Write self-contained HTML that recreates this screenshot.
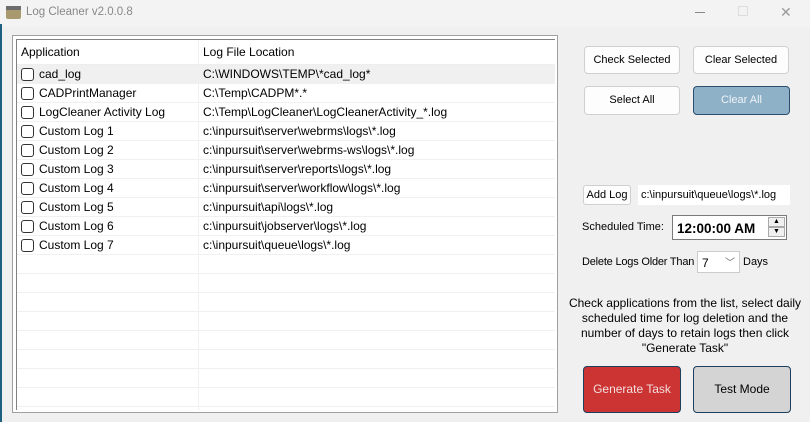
<!DOCTYPE html>
<html><head><meta charset="utf-8"><style>
*{box-sizing:border-box;margin:0;padding:0}
body{width:810px;height:422px;overflow:hidden;background:#f0f0f0;font-family:"Liberation Sans",sans-serif;font-size:11px;color:#000;position:relative}
.abs{position:absolute}
.title{left:0;top:0;width:810px;height:27px;background:#f3f3f3}
.lb{left:0;top:24px;width:2px;height:398px;background:#1f5f80}
.list{left:12px;top:35px;width:546px;height:378px;border:1px solid #a0a0a0;background:#fff}
.list .in{position:absolute;left:3px;top:3px;right:2px;bottom:2px;border:1px solid #828282;border-right:none;border-bottom:none;background:#fff;overflow:hidden}
.row{position:absolute;left:0;width:540px;height:19px;border-bottom:1px solid #f0f0f0}
.row span{position:absolute;top:2px;font-size:12px}
.cb{position:absolute;left:4px;top:3px;width:13px;height:13px;border:1px solid #333;border-radius:3px;background:#fff}
.div{position:absolute;left:181px;top:0;width:1px;height:400px;background:#f0f0f0}
.btn{position:absolute;background:#fdfdfd;border:1px solid #d0d0d0;border-radius:4px;text-align:center;font-size:11px}
</style></head><body>
<div class="abs title"></div>
<div class="abs" style="left:6px;top:6px;width:15px;height:13px;background:#a89a6e;border-radius:2px"></div>
<div class="abs" style="left:6px;top:6px;width:15px;height:4px;background:#6c6c6c"></div>
<div class="abs" style="left:26px;top:6px;font-size:11.5px;color:#888">Log Cleaner v2.0.0.8</div>
<div class="abs" style="left:695px;top:12px;width:10px;height:1px;background:#888"></div>
<div class="abs" style="left:738px;top:6px;width:10px;height:10px;border:1px solid #ddd"></div>
<div class="abs" style="left:780px;top:4px;font-size:14px;color:#999">✕</div>
<div class="abs lb"></div>

<div class="abs list"><div class="in">
<div class="div"></div>
<div class="row" style="top:0;height:25px;border-bottom:1px solid #eee"><span style="left:4px;top:5px">Application</span><span style="left:186px;top:5px">Log File Location</span></div>
<div class="row" style="top:25px;background:#f0f0f0"><div class="cb"></div><span style="left:22px">cad_log</span><span style="left:186px">C:\WINDOWS\TEMP\*cad_log*</span></div>
<div class="row" style="top:44px"><div class="cb"></div><span style="left:22px">CADPrintManager</span><span style="left:186px">C:\Temp\CADPM*.*</span></div>
<div class="row" style="top:63px"><div class="cb"></div><span style="left:22px">LogCleaner Activity Log</span><span style="left:186px">C:\Temp\LogCleaner\LogCleanerActivity_*.log</span></div>
<div class="row" style="top:82px"><div class="cb"></div><span style="left:22px">Custom Log 1</span><span style="left:186px">c:\inpursuit\server\webrms\logs\*.log</span></div>
<div class="row" style="top:101px"><div class="cb"></div><span style="left:22px">Custom Log 2</span><span style="left:186px">c:\inpursuit\server\webrms-ws\logs\*.log</span></div>
<div class="row" style="top:120px"><div class="cb"></div><span style="left:22px">Custom Log 3</span><span style="left:186px">c:\inpursuit\server\reports\logs\*.log</span></div>
<div class="row" style="top:139px"><div class="cb"></div><span style="left:22px">Custom Log 4</span><span style="left:186px">c:\inpursuit\server\workflow\logs\*.log</span></div>
<div class="row" style="top:158px"><div class="cb"></div><span style="left:22px">Custom Log 5</span><span style="left:186px">c:\inpursuit\api\logs\*.log</span></div>
<div class="row" style="top:177px"><div class="cb"></div><span style="left:22px">Custom Log 6</span><span style="left:186px">c:\inpursuit\jobserver\logs\*.log</span></div>
<div class="row" style="top:196px"><div class="cb"></div><span style="left:22px">Custom Log 7</span><span style="left:186px">c:\inpursuit\queue\logs\*.log</span></div>
<div class="row" style="top:215px"></div><div class="row" style="top:234px"></div><div class="row" style="top:253px"></div><div class="row" style="top:272px"></div><div class="row" style="top:291px"></div><div class="row" style="top:310px"></div><div class="row" style="top:329px"></div><div class="row" style="top:348px"></div>
</div></div>

<div class="btn" style="left:584px;top:46px;width:96px;height:28px;line-height:26px">Check Selected</div>
<div class="btn" style="left:693px;top:46px;width:96px;height:28px;line-height:26px">Clear Selected</div>
<div class="btn" style="left:584px;top:86px;width:96px;height:29px;line-height:27px">Select All</div>
<div class="btn" style="left:693px;top:86px;width:97px;height:29px;line-height:27px;background:#8fb1c8;border-color:#2b4f6e;color:#eef3f7">Clear All</div>

<div class="btn" style="left:583px;top:185px;width:48px;height:20px;line-height:18px;border-radius:3px">Add Log</div>
<div class="abs" style="left:638px;top:185px;width:152px;height:20px;background:#fff;padding:4px 0 0 3px;font-size:11px">c:\inpursuit\queue\logs\*.log</div>
<div class="abs" style="left:582px;top:221px">Scheduled Time:</div>
<div class="abs" style="left:672px;top:215px;width:115px;height:25px;background:#fff;border:1px solid #7a7a7a;font-size:13.5px;font-weight:bold;padding:5px 0 0 4px">12:00:00 AM</div>
<div class="abs" style="left:768px;top:217px;width:17px;height:10px;border:1px solid #aaa;background:#f0f0f0;font-size:7px;text-align:center;line-height:8px">▲</div>
<div class="abs" style="left:768px;top:227px;width:17px;height:10px;border:1px solid #aaa;background:#f0f0f0;font-size:7px;text-align:center;line-height:8px">▼</div>
<div class="abs" style="left:582px;top:256px;letter-spacing:-0.2px">Delete Logs Older Than</div>
<div class="abs" style="left:697px;top:251px;width:43px;height:22px;background:#fff;border:1px solid #ccc;padding:4px 0 0 4px;font-size:12px">7<span style="position:absolute;left:27px;top:2px;color:#666;font-size:10px">﹀</span></div>
<div class="abs" style="left:743px;top:256px">Days</div>
<div class="abs" style="left:560px;top:296px;width:250px;text-align:center;font-size:12px;line-height:15px">Check applications from the list, select daily scheduled time for log deletion and the number of days to retain logs then click "Generate Task"</div>
<div class="abs" style="left:583px;top:366px;width:98px;height:47px;background:#cc3333;border:1px solid #1c3f5e;border-radius:4px;color:#f3dede;text-align:center;line-height:45px;font-size:12px">Generate Task</div>
<div class="abs" style="left:693px;top:366px;width:98px;height:47px;background:#d4d4d4;border:1px solid #1c3f5e;border-radius:4px;text-align:center;line-height:45px;font-size:12px">Test Mode</div>
</body></html>
